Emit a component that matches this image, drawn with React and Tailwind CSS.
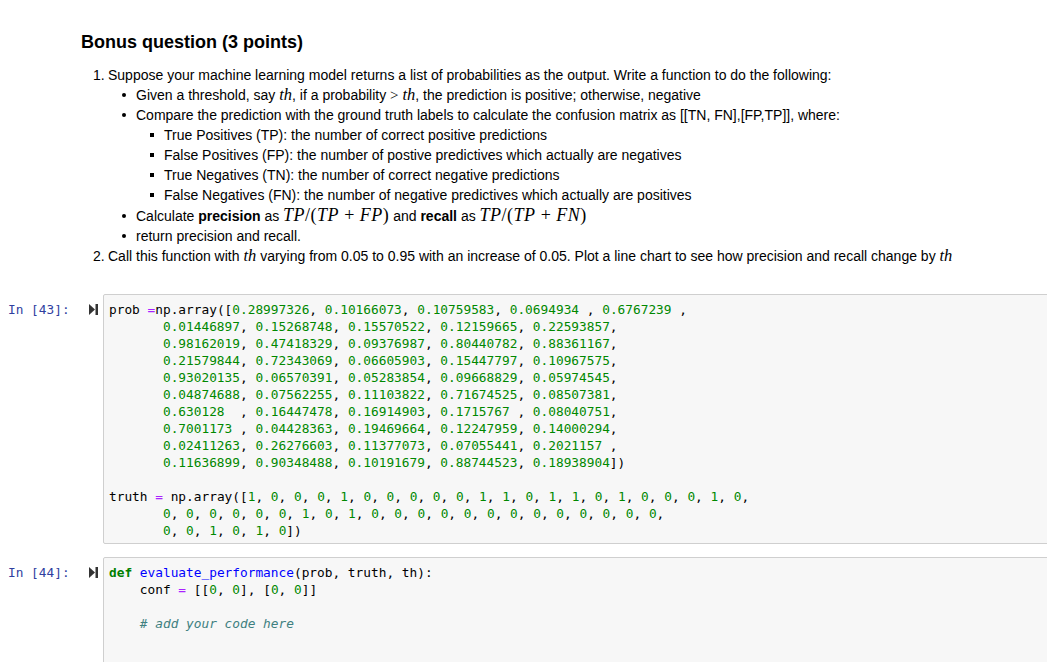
import React from "react";

const sans = { fontFamily: '"Liberation Sans", Arial, sans-serif' };
const mono = { fontFamily: '"DejaVu Sans Mono", monospace' };
const serif = { fontFamily: '"Liberation Serif", "Times New Roman", serif' };

const probLines = [
  "prob =np.array([0.28997326, 0.10166073, 0.10759583, 0.0694934 , 0.6767239 ,",
  "       0.01446897, 0.15268748, 0.15570522, 0.12159665, 0.22593857,",
  "       0.98162019, 0.47418329, 0.09376987, 0.80440782, 0.88361167,",
  "       0.21579844, 0.72343069, 0.06605903, 0.15447797, 0.10967575,",
  "       0.93020135, 0.06570391, 0.05283854, 0.09668829, 0.05974545,",
  "       0.04874688, 0.07562255, 0.11103822, 0.71674525, 0.08507381,",
  "       0.630128  , 0.16447478, 0.16914903, 0.1715767 , 0.08040751,",
  "       0.7001173 , 0.04428363, 0.19469664, 0.12247959, 0.14000294,",
  "       0.02411263, 0.26276603, 0.11377073, 0.07055441, 0.2021157 ,",
  "       0.11636899, 0.90348488, 0.10191679, 0.88744523, 0.18938904])",
  "",
  "truth = np.array([1, 0, 0, 0, 1, 0, 0, 0, 0, 0, 1, 1, 0, 1, 1, 0, 1, 0, 0, 0, 1, 0,",
  "       0, 0, 0, 0, 0, 0, 1, 0, 1, 0, 0, 0, 0, 0, 0, 0, 0, 0, 0, 0, 0, 0,",
  "       0, 0, 1, 0, 1, 0])",
];

// tiny highlighter: numbers green, "=" purple
function Line({ text }) {
  const parts = text.split(/(\d+(?:\.\d+)?|=)/);
  return (
    <div className="h-[17px] whitespace-pre">
      {parts.map((p, i) =>
        /^\d/.test(p) ? (
          <span key={i} className="text-[#008800]">{p}</span>
        ) : p === "=" ? (
          <span key={i} className="text-[#aa22ff]">=</span>
        ) : (
          <span key={i}>{p}</span>
        )
      )}
      {text === "" ? " " : null}
    </div>
  );
}

function RunIcon() {
  return (
    <svg width="9" height="11" viewBox="0 0 9 11" className="mt-[3px]">
      <polygon points="0,0 6,5.5 0,11" fill="#333" />
      <rect x="6.5" y="0" width="2.5" height="11" fill="#333" />
    </svg>
  );
}

function Cell({ n, children }) {
  return (
    <div className="flex mr-[-20px]">
      <div
        className="w-[81px] pl-[8px] pt-[7px] text-[12.8px] leading-[17px] text-[#303f9f] whitespace-pre"
        style={mono}
      >
        {`In [${n}]:`}
      </div>
      <div className="w-[22px] pl-[8px] pt-[7px]">
        <RunIcon />
      </div>
      <div
        className="flex-1 border border-[#cfcfcf] bg-[#f7f7f7] rounded-[2px] pl-[5px] pt-[6px] pb-[4px] text-[12.8px] leading-[17px] text-black"
        style={mono}
      >
        {children}
      </div>
    </div>
  );
}

function M({ children }) {
  return (
    <span className="italic text-[16.5px]" style={serif}>
      {children}
    </span>
  );
}

function Disc() {
  return (
    <span className="w-[14px] shrink-0 flex items-center">
      <span className="block w-[4px] h-[4px] rounded-full bg-black" />
    </span>
  );
}

function Square() {
  return (
    <span className="w-[14px] shrink-0 flex items-center">
      <span className="block w-[4px] h-[4px] bg-black" />
    </span>
  );
}

function Frac({ last }) {
  return (
    <span className="text-[18px] tracking-[0.5px]" style={serif}>
      <i>TP</i>/(<i>TP</i> + <i>{last}</i>)
    </span>
  );
}

export default function App() {
  return (
    <div className="w-[1047px] h-[662px] overflow-hidden bg-white text-black">
      {/* markdown cell */}
      <div className="pl-[81px] pt-[31px] text-[14px] leading-[20px]" style={sans}>
        <h3 className="text-[18px] leading-[22px] font-bold">Bonus question (3 points)</h3>

        <div className="mt-[12px] pl-[12px]">
          <div className="flex">
            <span className="w-[15px] shrink-0">1.</span>
            <div>
              <div>
                Suppose your machine learning model returns a list of probabilities as the output. Write a function
                to do the following:
              </div>
              <div className="ml-[14px]">
                <div className="flex">
                  <Disc />
                  <span>
                    Given a threshold, say <M>th</M>, if a probability <span style={serif} className="text-[15px]">&gt;</span> <M>th</M>, the prediction is positive; otherwise, negative
                  </span>
                </div>
                <div className="flex">
                  <Disc />
                  <span>
                    Compare the prediction with the ground truth labels to calculate the confusion matrix as [[TN,
                    FN],[FP,TP]], where:
                  </span>
                </div>
                <div className="ml-[28px]">
                  <div className="flex">
                    <Square />
                    <span>True Positives (TP): the number of correct positive predictions</span>
                  </div>
                  <div className="flex">
                    <Square />
                    <span>False Positives (FP): the number of postive predictives which actually are negatives</span>
                  </div>
                  <div className="flex">
                    <Square />
                    <span>True Negatives (TN): the number of correct negative predictions</span>
                  </div>
                  <div className="flex">
                    <Square />
                    <span>False Negatives (FN): the number of negative predictives which actually are positives</span>
                  </div>
                </div>
                <div className="flex">
                  <Disc />
                  <span>
                    Calculate <b>precision</b> as <Frac last="FP" /> and <b>recall</b> as <Frac last="FN" />
                  </span>
                </div>
                <div className="flex">
                  <Disc />
                  <span>return precision and recall.</span>
                </div>
              </div>
            </div>
          </div>
          <div className="flex">
            <span className="w-[15px] shrink-0">2.</span>
            <span>
              Call this function with <M>th</M> varying from 0.05 to 0.95 with an increase of 0.05. Plot a line chart
              to see how precision and recall change by <M>th</M>
            </span>
          </div>
        </div>
      </div>

      {/* code cells */}
      <div className="mt-[28px]">
        <Cell n="43">
          {probLines.map((l, i) => (
            <Line key={i} text={l} />
          ))}
        </Cell>
      </div>

      <div className="mt-[13px]">
        <Cell n="44">
          <div className="h-[17px] whitespace-pre">
            <span className="text-[#008000] font-bold">def</span>{" "}
            <span className="text-[#0000ff]">evaluate_performance</span>(prob, truth, th):
          </div>
          <Line text="    conf = [[0, 0], [0, 0]]" />
          <Line text="" />
          <div className="h-[17px] whitespace-pre italic text-[#408080]">    # add your code here</div>
          <Line text="" />
          <Line text="" />
          <Line text="" />
          <Line text="" />
        </Cell>
      </div>
    </div>
  );
}
